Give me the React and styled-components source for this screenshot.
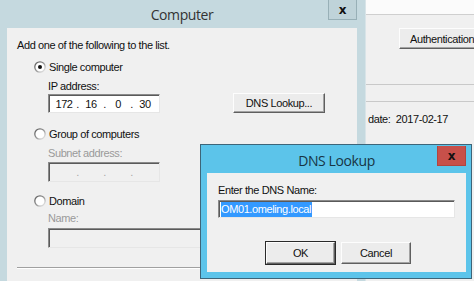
import React from 'react'
import styled, { createGlobalStyle } from 'styled-components'

const GlobalStyle = createGlobalStyle`
  html, body {
    margin: 0;
    padding: 0;
  }
  body {
    width: 474px;
    height: 281px;
    overflow: hidden;
    background: #f0f0f0;
    font-family: "Liberation Sans", Arial, sans-serif;
    font-size: 11px;
    letter-spacing: -0.4px;
    color: #111;
  }
`

const Desktop = styled.div`
  position: relative;
  display: flex;
  width: 474px;
  height: 281px;
  overflow: hidden;
`

// window frame shared by the Computer dialog and the DNS Lookup dialog
const Window = styled.div`
  display: flex;
  flex-direction: column;
  box-sizing: border-box;
  background: ${p => (p.active ? '#5cc4ea' : '#c5d9df')};
`

const ComputerWindow = styled(Window)`
  width: 365px;
  flex-shrink: 0;
  padding: 0 8px 0 7px;
`

const DnsWindow = styled(Window)`
  position: absolute;
  left: 200px;
  top: 144px;
  width: 272px;
  height: 135px;
  border: 1px solid #3d6579;
  padding: 0 5px 6px 6px;
`

const TitleBar = styled.div`
  display: grid;
  grid-template-columns: 1fr auto 1fr;
  align-items: start;
  height: 28px;
  flex-shrink: 0;
`

const Title = styled.div`
  grid-column: 2;
  font-family: "Open Sans", "Noto Sans", sans-serif;
  font-size: 14px;
  letter-spacing: -0.4px;
  line-height: ${p => p.lh}px;
  color: ${p => (p.active ? '#183544' : '#333')};
`

const CloseButton = styled.div`
  grid-column: 3;
  justify-self: end;
  margin-top: ${p => p.top}px;
  width: 29px;
  height: 20px;
  box-sizing: border-box;
  display: flex;
  align-items: center;
  justify-content: center;
  background: ${p => (p.active ? '#c7504a' : '#bfd3d9')};
  border: 1px solid ${p => (p.active ? '#b2443e' : '#98b0b7')};
  border-top: none;
  font-family: "DejaVu Sans", sans-serif;
  font-weight: bold;
  font-size: 12px;
  letter-spacing: 0;
  color: #111;
`

const Client = styled.div`
  flex: 1;
  background: #f0f0f0;
  padding: 10px 0 0 ${p => p.pad}px;
  min-height: 0;
`

const Text = styled.div`
  line-height: 14px;
  height: 14px;
  white-space: nowrap;
  margin-top: ${p => p.mt || 0}px;
  margin-left: ${p => p.ml || 0}px;
  color: ${p => (p.disabled ? '#9a9a9a' : '#111')};
`

const RadioRow = styled.div`
  display: flex;
  align-items: center;
  gap: 3px;
  height: 14px;
  line-height: 14px;
  margin-top: ${p => p.mt}px;
  margin-left: 17px;
`

const FieldRow = styled.div`
  display: flex;
  align-items: flex-start;
  margin-top: ${p => p.mt}px;
  margin-left: ${p => p.ml ?? 31}px;
`

const InputBox = styled.div`
  box-sizing: border-box;
  width: ${p => p.w}px;
  height: ${p => p.h}px;
  display: flex;
  align-items: center;
  background: ${p => (p.disabled ? '#f0f0f0' : '#fff')};
  border-top: 1px solid #8a8a8a;
  border-left: 1px solid #8a8a8a;
  border-right: 1px solid #e6e6e6;
  border-bottom: 1px solid #e6e6e6;
  box-shadow: inset 1px 1px 0 #5a5a5a;
  padding-left: ${p => p.pl || 0}px;
  overflow: hidden;
  white-space: nowrap;
`

const Octet = styled.span`
  width: 20px;
  text-align: center;
`

const Dot = styled.span`
  width: 7px;
  text-align: center;
  color: ${p => (p.disabled ? '#a8a8a8' : '#111')};
`

const Selected = styled.span`
  background: #3399ff;
  color: #fff;
  line-height: 15px;
  padding-right: 1px;
`

const Button = styled.div`
  box-sizing: border-box;
  width: ${p => p.w}px;
  height: ${p => p.h}px;
  margin-top: ${p => p.mt || 0}px;
  margin-left: ${p => p.ml || 0}px;
  display: flex;
  align-items: center;
  justify-content: ${p => (p.left ? 'flex-start' : 'center')};
  padding-left: ${p => (p.left ? 10 : 0)}px;
  background: #ececec;
  border-top: 1px solid #fdfdfd;
  border-left: 1px solid #fdfdfd;
  border-right: 1px solid #5f5f5f;
  border-bottom: 1px solid #5f5f5f;
  box-shadow: ${p => (p.primary ? '0 0 0 1px #2a2a2a, ' : '')}inset -1px -1px 0 #a3a3a3;
  white-space: nowrap;
  flex-shrink: 0;
`

const Separator = styled.div`
  margin-top: ${p => p.mt}px;
  border-top: 1px solid #a0a0a0;
  border-bottom: 1px solid #fff;
`

const ButtonRow = styled.div`
  display: flex;
  gap: 6px;
  margin-top: 24px;
  margin-left: 48px;
`

const BackWindow = styled.div`
  flex: 1;
  display: flex;
  flex-direction: column;
  background: #f0f0f0;
  border-left: 1px solid #d8e4e8;
`

const BackHeader = styled.div`
  height: 14px;
  background: #fbfbfb;
  border-bottom: 1px solid #cfcfcf;
`

const Band = styled.div`
  margin-top: ${p => p.mt}px;
  height: 16px;
  border-top: 1px solid #c9c9c9;
  border-bottom: 1px solid #c9c9c9;
`

function Radio({ checked }) {
  return (
    <svg width="12" height="12" viewBox="0 0 12 12">
      <defs>
        <linearGradient id="radioRim" x1="0" y1="0" x2="1" y2="1">
          <stop offset="0" stopColor="#555" />
          <stop offset="0.55" stopColor="#9a9a9a" />
          <stop offset="1" stopColor="#f6f6f6" />
        </linearGradient>
      </defs>
      <circle cx="6" cy="6" r="5.2" fill="#fff" stroke="url(#radioRim)" strokeWidth="1.3" />
      {checked && <circle cx="6" cy="6" r="2" fill="#111" />}
    </svg>
  )
}

function IpField({ values, disabled }) {
  const parts = values || ['', '', '', '']
  return (
    <InputBox w={112} h={disabled ? 20 : 19} pl={5} disabled={disabled}>
      {parts.map((v, i) => (
        <React.Fragment key={i}>
          {i > 0 && <Dot disabled={disabled}>.</Dot>}
          <Octet>{v}</Octet>
        </React.Fragment>
      ))}
    </InputBox>
  )
}

export default function App() {
  return (
    <Desktop>
      <GlobalStyle />
      <ComputerWindow>
        <TitleBar>
          <Title lh={30}>Computer</Title>
          <CloseButton top={0}>x</CloseButton>
        </TitleBar>
        <Client pad={10}>
          <Text>Add one of the following to the list.</Text>

          <RadioRow mt={8}>
            <Radio checked />
            <span>Single computer</span>
          </RadioRow>
          <Text mt={5} ml={31}>IP address:</Text>
          <FieldRow mt={1}>
            <IpField values={['172', '16', '0', '30']} />
            <Button w={92} h={20} mt={-1} ml={73}>DNS Lookup...</Button>
          </FieldRow>

          <RadioRow mt={14}>
            <Radio />
            <span>Group of computers</span>
          </RadioRow>
          <Text mt={5} ml={31} disabled>Subnet address:</Text>
          <FieldRow mt={2}>
            <IpField disabled />
          </FieldRow>

          <RadioRow mt={12}>
            <Radio />
            <span>Domain</span>
          </RadioRow>
          <Text mt={3} ml={31} disabled>Name:</Text>
          <FieldRow mt={3}>
            <InputBox w={277} h={20} disabled />
          </FieldRow>

          <Separator mt={19} />
        </Client>
      </ComputerWindow>

      <BackWindow>
        <BackHeader />
        <Button w={90} h={21} mt={13} ml={33} left>Authentication</Button>
        <Band mt={35} />
        <Text mt={10} ml={2}>date:&nbsp;&nbsp;2017-02-17</Text>
      </BackWindow>

      <DnsWindow active>
        <TitleBar>
          <Title lh={32} active>DNS Lookup</Title>
          <CloseButton top={1} active>x</CloseButton>
        </TitleBar>
        <Client pad={11}>
          <Text>Enter the DNS Name:</Text>
          <FieldRow mt={3} ml={0}>
            <InputBox w={237} h={18} pl={2}>
              <Selected>OM01.omeling.local</Selected>
            </InputBox>
          </FieldRow>
          <ButtonRow>
            <Button w={69} h={22} primary>OK</Button>
            <Button w={70} h={22}>Cancel</Button>
          </ButtonRow>
        </Client>
      </DnsWindow>
    </Desktop>
  )
}
